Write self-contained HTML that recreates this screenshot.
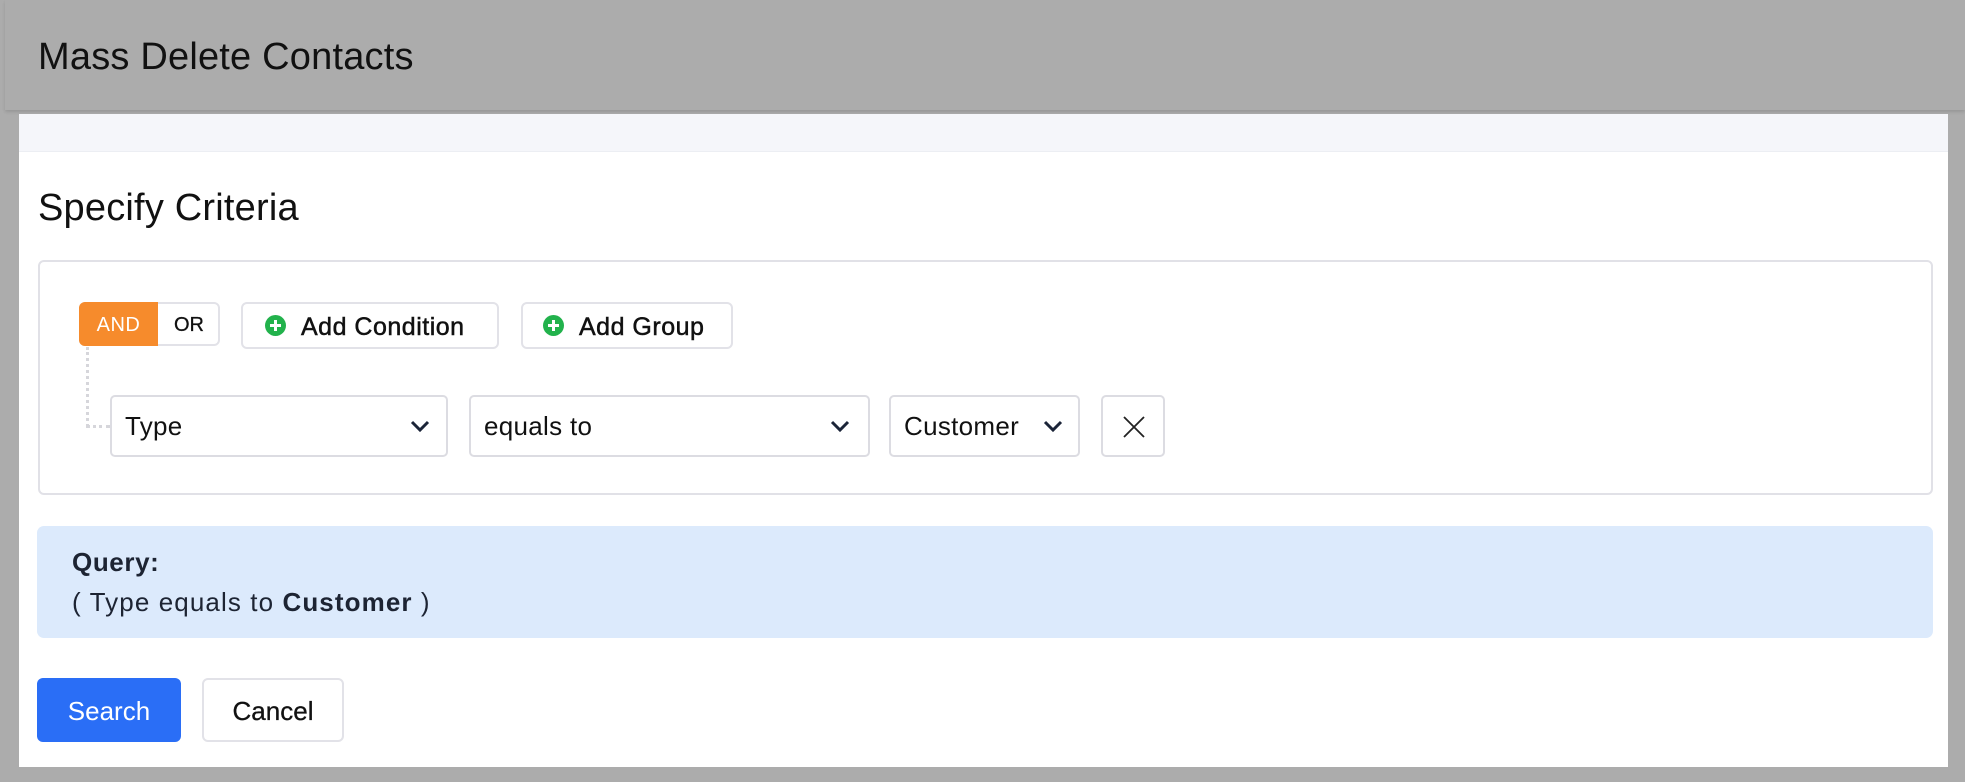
<!DOCTYPE html>
<html><head><meta charset="utf-8"><style>
*{box-sizing:border-box;margin:0;padding:0}
body{width:1965px;height:782px;background:#acacac;position:relative;overflow:hidden;font-family:"Liberation Sans",Arial,sans-serif;color:#111}
.a{position:absolute}
.hdr{left:5px;top:0;width:1960px;height:110px;background:#acacac;box-shadow:0 2px 3px rgba(0,0,0,.12)}
.panel{left:19px;top:114px;width:1929px;height:653px;background:#fff}
.band{left:19px;top:114px;width:1929px;height:38px;background:#f5f6fa;border-bottom:1px solid #eceef3}
.t1{left:38px;top:36px;font-size:38px;color:#111;letter-spacing:0.2px}
.t2{left:38px;top:187px;font-size:38px;color:#111;letter-spacing:0.2px}
.box{left:38px;top:260px;width:1895px;height:235px;border:2px solid #e1e1e7;border-radius:6px}
.btn{border:2px solid #e2e2e8;border-radius:6px;background:#fff;font-size:25px;letter-spacing:0.5px;display:flex;align-items:center;color:#111;-webkit-text-stroke:0.5px #111;padding-top:4px}
.sel{border:2px solid #dcdce2;border-radius:5px;background:#fff;font-size:26px;letter-spacing:0.3px;display:flex;align-items:center;padding-left:13px;color:#111}
.chev{position:absolute;top:50%;margin-top:-8px}
.plus{width:21px;height:21px;border-radius:50%;background:#22b24c;position:relative;margin-right:15px;margin-top:-4px}
.plus:before{content:"";position:absolute;left:5px;top:9px;width:11px;height:3px;background:#fff}
.plus:after{content:"";position:absolute;left:9px;top:5px;width:3px;height:11px;background:#fff}
</style></head><body>
<div class="a hdr"></div>
<div class="a t1">Mass Delete Contacts</div>
<div class="a panel"></div>
<div class="a band"></div>
<div class="a t2">Specify Criteria</div>
<div class="a box"></div>

<div class="a" style="left:79px;top:302px;width:141px;height:44px;border:2px solid #e2e2e8;border-radius:6px;background:#fff"></div>
<div class="a" style="left:79px;top:302px;width:79px;height:44px;background:#f68b2c;border-radius:6px 0 0 6px;color:#fff;font-size:20px;letter-spacing:0.5px;display:flex;align-items:center;justify-content:center;padding-top:2px">AND</div>
<div class="a" style="left:158px;top:302px;width:62px;height:44px;font-size:20px;display:flex;align-items:center;justify-content:center;color:#111;-webkit-text-stroke:0.3px #111;padding-top:2px">OR</div>

<div class="a btn" style="left:241px;top:302px;width:258px;height:47px;padding-left:22px"><div class="plus"></div>Add Condition</div>
<div class="a btn" style="left:521px;top:302px;width:212px;height:47px;padding-left:20px"><div class="plus"></div>Add Group</div>

<div class="a" style="left:86px;top:347px;width:0;height:80px;border-left:3px dotted #d6d6db"></div>
<div class="a" style="left:86px;top:425px;width:24px;height:0;border-top:3px dotted #d6d6db"></div>

<div class="a sel" style="left:110px;top:395px;width:338px;height:62px">Type
<svg class="chev" style="left:297px" width="22" height="16" viewBox="0 0 22 16"><path d="M3 4l8 8 8-8" fill="none" stroke="#1b2438" stroke-width="3"/></svg></div>
<div class="a sel" style="left:469px;top:395px;width:401px;height:62px">equals to
<svg class="chev" style="left:358px" width="22" height="16" viewBox="0 0 22 16"><path d="M3 4l8 8 8-8" fill="none" stroke="#1b2438" stroke-width="3"/></svg></div>
<div class="a sel" style="left:889px;top:395px;width:191px;height:62px">Customer
<svg class="chev" style="left:151px" width="22" height="16" viewBox="0 0 22 16"><path d="M3 4l8 8 8-8" fill="none" stroke="#1b2438" stroke-width="3"/></svg></div>
<div class="a" style="left:1101px;top:395px;width:64px;height:62px;border:2px solid #dcdce2;border-radius:5px;background:#fff">
<svg style="position:absolute;left:19px;top:18px" width="24" height="24" viewBox="0 0 24 24"><path d="M2 2L22 22M22 2L2 22" stroke="#222" stroke-width="1.8"/></svg></div>

<div class="a" style="left:37px;top:526px;width:1896px;height:112px;background:#dceafc;border-radius:7px"></div>
<div class="a" style="left:72px;top:547px;font-size:26px;letter-spacing:0.6px;font-weight:bold;color:#1d2433">Query:</div>
<div class="a" style="left:72px;top:587px;font-size:26px;letter-spacing:1.1px;color:#1d2433">( Type equals to <b>Customer</b> )</div>

<div class="a" style="left:37px;top:678px;width:144px;height:64px;background:#2a6ef6;border-radius:6px;color:#fff;font-size:26px;display:flex;align-items:center;justify-content:center;padding-top:2px">Search</div>
<div class="a" style="left:202px;top:678px;width:142px;height:64px;border:2px solid #e2e2e8;border-radius:6px;background:#fff;color:#111;font-size:26px;display:flex;align-items:center;justify-content:center;-webkit-text-stroke:0.3px #111;padding-top:2px">Cancel</div>
</body></html>
